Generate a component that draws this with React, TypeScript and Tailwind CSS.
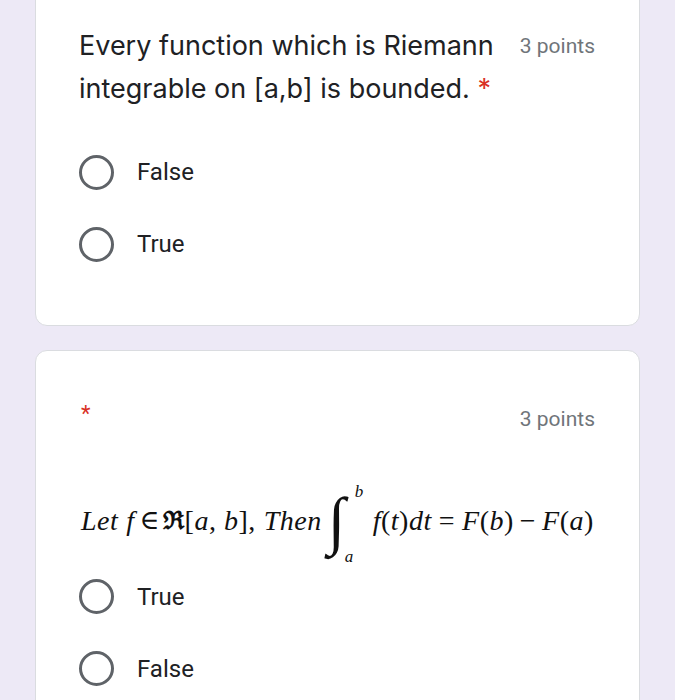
const sans = "font-['Roboto','Liberation_Sans',sans-serif]";

function Radio({ label }: { label: string }) {
  return (
    <div className="flex items-center h-[72px]">
      <span className="w-[35px] h-[35px] rounded-full border-[3px] border-[#5f6368] shrink-0" />
      <span className={`ml-[23px] text-[24px] text-[#202124] ${sans}`}>{label}</span>
    </div>
  );
}

function Points() {
  return <span className={`text-[21px] text-[#70757a] whitespace-nowrap ${sans}`}>3 points</span>;
}

export default function App() {
  return (
    <div className="min-h-[700px] h-[700px] overflow-hidden bg-[#ede9f6]">
      <div className="w-[605px] ml-[35px] flex flex-col gap-[24px]">
        {/* card 1 */}
        <div className="-mt-[20px] bg-white border border-[#dadce0] rounded-[12px] pl-[43px] pr-[44px] pt-[43px] pb-[45px]">
          <div className="flex items-start justify-between gap-[10px]">
            <div className="flex-1 text-[27px] leading-[43px] text-[#202124] font-['Inter','Roboto',sans-serif]">
              Every function which is Riemann integrable on [a,b] is bounded.{" "}
              <span className="text-[#d93025]">*</span>
            </div>
            <div className="pt-[7px]">
              <Points />
            </div>
          </div>
          <div className="mt-[26px] flex flex-col">
            <Radio label="False" />
            <Radio label="True" />
          </div>
        </div>

        {/* card 2 */}
        <div className="bg-white border border-[#dadce0] rounded-[12px] pl-[43px] pr-[44px] pt-[46px] pb-[40px]">
          <div className="flex items-start justify-between">
            <span className={`text-[22px] text-[#d93025] ml-[2px] ${sans}`}>*</span>
            <div className="pt-[7px]">
              <Points />
            </div>
          </div>
          <div className="mt-[50px] h-[70px] flex items-center text-[28px] tracking-[0.5px] text-[#111] font-['Liberation_Serif','DejaVu_Serif',serif] whitespace-nowrap">
            <span className="italic ml-[2px]">Let</span>
            <span className="italic ml-[8px]">f</span>
            <span className="ml-[5px] mr-[3px] text-[27px]">∈</span>
            <span className="font-['DejaVu_Serif',serif] font-bold text-[25px]">ℜ</span>
            <span>[</span>
            <span className="italic">a</span>
            <span>,&nbsp;</span>
            <span className="italic">b</span>
            <span>],</span>
            <span className="italic ml-[8px]">Then</span>
            <span className="relative inline-block ml-[6px] w-[45px]">
              <span className="block text-[64px] leading-none italic">∫</span>
              <span className="absolute left-[27px] -top-[6px] text-[17px] italic leading-none">b</span>
              <span className="absolute left-[17px] bottom-[-12px] text-[17px] italic leading-none">a</span>
            </span>
            <span className="italic">f</span>
            <span>(</span>
            <span className="italic">t</span>
            <span>)</span>
            <span className="italic">dt</span>
            <span className="mx-[7px]">=</span>
            <span className="italic">F</span>
            <span>(</span>
            <span className="italic">b</span>
            <span>)</span>
            <span className="mx-[6px]">−</span>
            <span className="italic">F</span>
            <span>(</span>
            <span className="italic">a</span>
            <span>)</span>
          </div>
          <div className="mt-[5px] flex flex-col">
            <Radio label="True" />
            <Radio label="False" />
          </div>
        </div>
      </div>
    </div>
  );
}
